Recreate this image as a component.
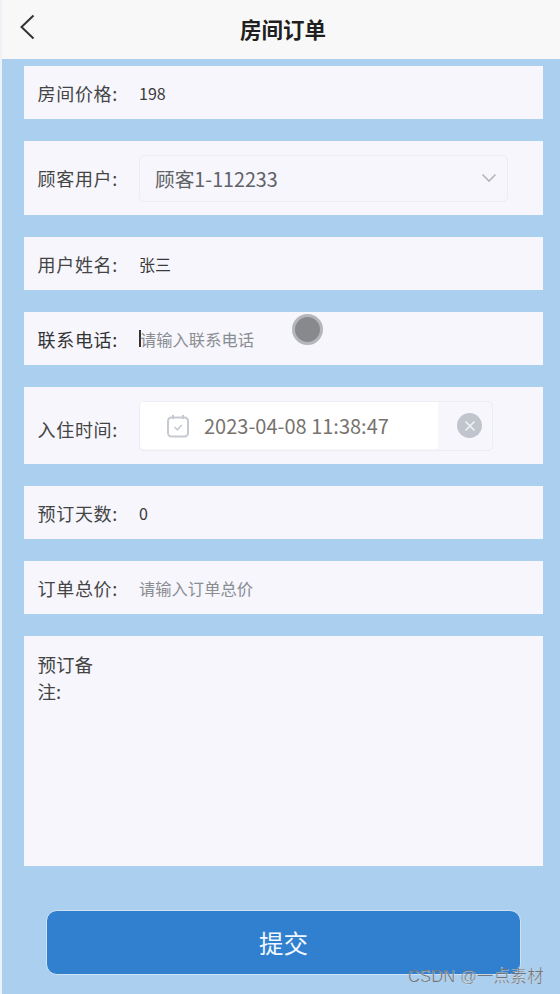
<div class="page">
  <header class="topbar">
    <svg class="back" width="18" height="28" viewBox="0 0 18 28" fill="none">
      <path d="M15.5 2.5 L3.5 14 L15.5 25.5" stroke="#333" stroke-width="2" />
    </svg>
    <h1>房间订单</h1>
  </header>

  <main class="form">
    <div class="row plain first">
      <span class="label">房间价格:</span>
      <span class="value">198</span>
    </div>

    <div class="row select-row">
      <span class="label">顾客用户:</span>
      <div class="select">
        <span>顾客1-112233</span>
        <svg width="16" height="10" viewBox="0 0 16 10" fill="none">
          <path d="M1.5 1.5 L8 8 L14.5 1.5" stroke="#b4b6ba" stroke-width="1.6" />
        </svg>
      </div>
    </div>

    <div class="row plain">
      <span class="label">用户姓名:</span>
      <span class="value">张三</span>
    </div>

    <div class="row plain phone">
      <span class="label dark">联系电话:</span>
      <span class="caret"></span>
      <span class="placeholder">请输入联系电话</span>
      <span class="touch"></span>
    </div>

    <div class="row date-row">
      <span class="label date-label">入住时间:</span>
      <div class="picker">
        <div class="picker-input">
          <svg width="24" height="24" viewBox="0 0 24 24" fill="none" stroke="#c6cad0" stroke-width="2">
            <rect x="2" y="3.5" width="20" height="19" rx="3.5" />
            <path d="M7 1 V5 M17 1 V5" />
            <path d="M8.5 13 L11.3 15.8 L15.8 11" stroke-width="1.6" />
          </svg>
          <span>2023-04-08 11:38:47</span>
        </div>
        <span class="clear">
          <svg width="12" height="12" viewBox="0 0 12 12" fill="none" stroke="#eef0f3" stroke-width="1.7">
            <path d="M1.5 1.5 L10.5 10.5 M10.5 1.5 L1.5 10.5" />
          </svg>
        </span>
      </div>
    </div>

    <div class="row plain">
      <span class="label">预订天数:</span>
      <span class="value">0</span>
    </div>

    <div class="row plain">
      <span class="label">订单总价:</span>
      <span class="placeholder">请输入订单总价</span>
    </div>

    <div class="row notes">
      <span class="label notes-label">预订备注:</span>
    </div>

    <button class="submit">提交</button>
  </main>

  <span class="watermark">CSDN @一点素材</span>
</div>

<style>
  :global(body) {
    margin: 0;
    background: #abcfef;
  }
  .page {
    position: relative;
    width: 560px;
    height: 994px;
    box-sizing: border-box;
    border-left: 2px solid #eef2f6;
    background: #abcfef;
    overflow: hidden;
    font-family: "Noto Sans CJK SC", "Liberation Sans", sans-serif;
  }
  .topbar {
    position: relative;
    height: 59px;
    display: flex;
    align-items: center;
    justify-content: center;
    background: #f8f8f8;
  }
  .back {
    position: absolute;
    left: 16px;
    top: 13px;
  }
  h1 {
    margin: -3px 0 0 4px;
    font-size: 21.5px;
    line-height: 59px;
    font-weight: 700;
    color: #1f1f1f;
  }
  .form {
    display: flex;
    flex-direction: column;
    padding: 7px 17px 0 22px;
  }
  .row {
    display: flex;
    align-items: center;
    background: #f6f6fc;
    padding-left: 13.5px;
    margin-bottom: 22px;
  }
  .plain {
    height: 53px;
  }
  .label {
    width: 101.5px;
    flex: none;
    font-size: 18px;
    letter-spacing: 0.7px;
    white-space: nowrap;
    color: #444;
  }
  .label.dark {
    color: #333;
  }
  .value {
    font-size: 16px;
    color: #3a3a3a;
  }
  .select-row {
    height: 74px;
  }
  .select {
    width: 369px;
    height: 47px;
    box-sizing: border-box;
    display: flex;
    align-items: center;
    justify-content: space-between;
    padding: 0 10px 0 15px;
    border: 1.5px solid #ebedf1;
    border-radius: 5px;
    font-size: 19.7px;
    color: #606266;
  }
  .phone {
    position: relative;
  }
  .caret {
    width: 1.5px;
    height: 17px;
    background: #333;
  }
  .placeholder {
    font-size: 16.3px;
    color: #8a8d92;
  }
  .phone .placeholder {
    margin-left: -0.5px;
  }
  .touch {
    position: absolute;
    left: 268px;
    top: 2px;
    width: 25px;
    height: 25px;
    border: 3px solid #b4b6bb;
    border-radius: 50%;
    background: #88898c;
  }
  .date-row {
    height: 77px;
    margin-bottom: 22px;
  }
  .date-label {
    padding-top: 7px;
  }
  .picker {
    width: 354px;
    height: 50px;
    box-sizing: border-box;
    display: flex;
    align-items: center;
    border: 1.5px solid #ebedf1;
    border-radius: 5px;
  }
  .picker-input {
    width: 298px;
    height: 47px;
    flex: none;
    box-sizing: border-box;
    display: flex;
    align-items: center;
    gap: 14px;
    padding-left: 26px;
    background: #fff;
    border-radius: 4px 0 0 4px;
    font-size: 20px;
    color: #77736f;
  }
  .clear {
    width: 25px;
    height: 25px;
    margin-left: 19px;
    display: flex;
    align-items: center;
    justify-content: center;
    border-radius: 50%;
    background: #c0c4cc;
  }
  .notes {
    height: 230px;
    align-items: flex-start;
    margin-bottom: 44px;
  }
  .notes-label {
    width: 66px;
    padding-top: 15px;
    font-size: 18.5px;
    letter-spacing: 0;
    white-space: normal;
    line-height: 27px;
  }
  .submit {
    align-self: flex-start;
    width: 475px;
    height: 65px;
    margin-left: 22px;
    padding-bottom: 2px;
    border: 1.5px solid #cfe2f5;
    border-radius: 11px;
    background: #3180cf;
    color: #f2f8fd;
    font-family: inherit;
    font-size: 24.5px;
  }
  .watermark {
    position: absolute;
    left: 406px;
    bottom: 7px;
    font-size: 16.7px;
    color: #6f767d;
    -webkit-text-stroke: 0.2px #fff;
    font-family: "Liberation Sans", "Noto Sans CJK SC", sans-serif;
  }
</style>
